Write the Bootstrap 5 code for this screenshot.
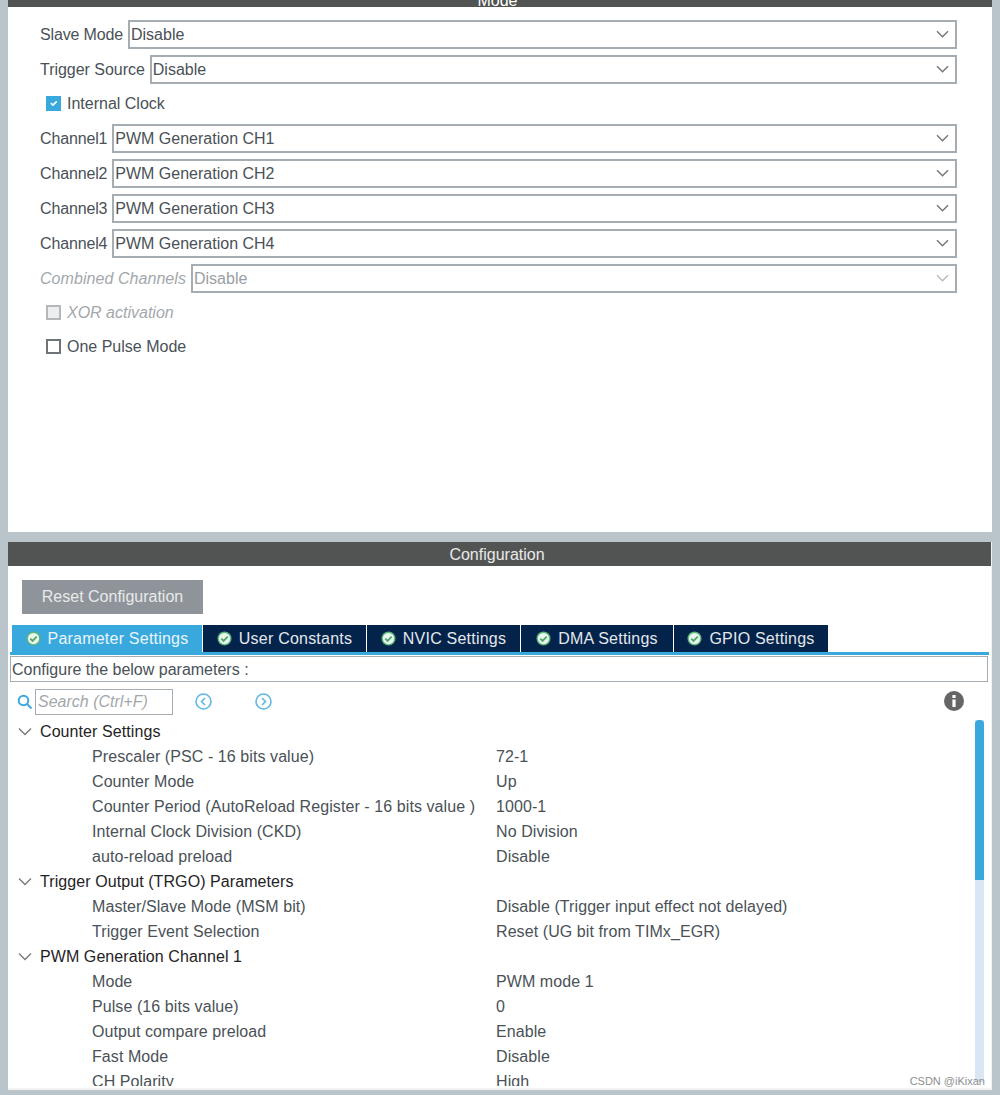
<!DOCTYPE html>
<html lang="en"><head><meta charset="utf-8"><title>TIM Mode and Configuration</title>
<link href="https://cdn.jsdelivr.net/npm/bootstrap@5.3.0/dist/css/bootstrap.min.css" rel="stylesheet">
<style>
html,body{height:1095px;overflow:hidden}
body{background:#b9c5cb;font-family:"Liberation Sans",Arial,sans-serif;font-size:16px;color:#4a5157;padding:0 8px;position:relative}
.pane{background:#fff}
.mode-pane{height:532px;margin-bottom:10px}
.head-cut{height:7px;background:#525453;color:#fff;overflow:hidden;font-size:16px;display:flex;justify-content:center;align-items:flex-end;padding-right:5px;line-height:9px}
.head-cut span{margin-bottom:2px}
.mode-form{padding:13px 35px 0 32px}
.frow{height:29px;margin-bottom:6px;gap:5px;white-space:nowrap}
.frow label{line-height:29px;letter-spacing:-.15px}
.frow label.is-off{letter-spacing:.06px}
.frow label.lbl-wide{letter-spacing:-.03px}
.frow .form-select{height:29px;border:2px solid #a5adb2;border-radius:0;padding:0 0 0 1px;font-size:16px;color:#4a5157;line-height:25px;flex:1;min-width:0;background-position:right 5px center;background-size:15px 11px;--bs-form-select-bg-img:url("data:image/svg+xml,%3csvg xmlns='http://www.w3.org/2000/svg' viewBox='0 0 16 12'%3e%3cpath fill='none' stroke='%23777' stroke-width='1.6' d='M2 2.5l6 6 6-6'/%3e%3c/svg%3e")}
.frow .form-select:disabled{background-color:#fff;color:#9aa0a4;border-color:#a5adb2;--bs-form-select-bg-img:url("data:image/svg+xml,%3csvg xmlns='http://www.w3.org/2000/svg' viewBox='0 0 16 12'%3e%3cpath fill='none' stroke='%23bbb' stroke-width='1.6' d='M2 2.5l6 6 6-6'/%3e%3c/svg%3e")}
.is-off{color:#a3a8ac;font-style:italic}
.chk{height:27px;margin:0 0 7px 6px;gap:6px;padding:0}
.chk .form-check-input{width:15px;height:15px;margin:0;border:2px solid #6f7478;border-radius:0;float:none;flex:none}
.chk .form-check-input:checked{background-color:#39a9dd;border-color:#39a9dd}
.chk .form-check-input:disabled{background-color:#eceeef;border-color:#b3b8bb;opacity:1}
.chk .form-check-label{opacity:1!important}
.cfg-head{height:24px;background:#525453;color:#e9eaea;text-align:center;line-height:25px;padding-right:5px}
.cfg-pane{height:548px;overflow:hidden;position:relative;border-right:1px solid #f2f2f2;border-bottom:2px solid #f2f2f2}
.btn-reset{--bs-btn-bg:#8e9499;--bs-btn-border-color:#8e9499;--bs-btn-color:#e8eaeb;--bs-btn-hover-bg:#8e9499;--bs-btn-hover-border-color:#8e9499;--bs-btn-hover-color:#e8eaeb;height:34px;width:181px;padding:0;border-radius:0;font-size:16px;margin:14px 0 11px 14px;display:block}
.cfg-tabs{padding-left:4px;height:27px;gap:1px;flex-wrap:nowrap;border:0}
.cfg-tab{background:#03234b;color:#e4e8ec;height:27px;line-height:27px;display:flex;align-items:center;justify-content:center;gap:7px;font-size:16px;letter-spacing:.22px;white-space:nowrap;text-decoration:none}
.cfg-tab:hover{color:#e4e8ec}
.cfg-tab.on{background:#39a9dd;color:#e9f5fb}
.t1{width:190px}.t2{width:163px}.t3{width:153px}.t4{width:152px}.t5{width:154px}
.tab-rule{height:3px;background:#39a9dd;margin:0 2px}
.cfg-line{height:26px;border:1px solid #a5adb2;margin:1px 3px 0 2px;line-height:25px;padding-left:1px;color:#4a5157}
.search-row{height:37px;padding:2px 0 0 9px;position:relative}
.search-box{width:138px;height:26px;border:1px solid #a5adb2;margin-left:2px;border-radius:0;padding:0 2px;font-size:16px;font-style:italic;line-height:24px;box-shadow:none}
.search-box::placeholder{color:#a3a8ac}
.nav-dot{margin-left:22px;flex:none}
.nav-dot+.nav-dot{margin-left:43px}
.info-dot{position:absolute;right:27px;top:9px}
.tree{margin:0;padding:0;list-style:none;color:#4a5157;letter-spacing:.08px;height:367px;overflow:hidden}
.tree li{height:25px;line-height:25px;display:flex;white-space:nowrap}
.tree .grp{padding-left:10px;color:#1f2326;gap:8px;align-items:center}
.tree .itm span:first-child{width:488px;padding-left:84px;flex:none}
.track{position:absolute;left:967px;top:178px;width:9px;height:362px;background:#d9e7f4}
.thumb{width:9px;height:160px;background:#39a9dd;border-radius:4px 4px 0 0}
.mark-w{position:absolute;right:15px;top:1074px;font-size:11px;color:#8b8f92;line-height:14px}
</style></head><body>
<section class="pane mode-pane">
<div class="head-cut"><span>Mode</span></div>
<form class="mode-form">
<div class="d-flex frow"><label>Slave Mode</label><select class="form-select" aria-label="Slave Mode"><option>Disable</option></select></div>
<div class="d-flex frow"><label class="lbl-wide">Trigger Source</label><select class="form-select" aria-label="Trigger Source"><option>Disable</option></select></div>
<div class="form-check d-flex align-items-center chk"><input class="form-check-input" type="checkbox" checked id="c1"><label class="form-check-label" for="c1">Internal Clock</label></div>
<div class="d-flex frow"><label>Channel1</label><select class="form-select" aria-label="Channel1"><option>PWM Generation CH1</option></select></div>
<div class="d-flex frow"><label>Channel2</label><select class="form-select" aria-label="Channel2"><option>PWM Generation CH2</option></select></div>
<div class="d-flex frow"><label>Channel3</label><select class="form-select" aria-label="Channel3"><option>PWM Generation CH3</option></select></div>
<div class="d-flex frow"><label>Channel4</label><select class="form-select" aria-label="Channel4"><option>PWM Generation CH4</option></select></div>
<div class="d-flex frow"><label class="is-off">Combined Channels</label><select class="form-select" disabled aria-label="Combined Channels"><option>Disable</option></select></div>
<div class="form-check d-flex align-items-center chk"><input class="form-check-input" type="checkbox" disabled id="c2"><label class="form-check-label is-off" for="c2">XOR activation</label></div>
<div class="form-check d-flex align-items-center chk"><input class="form-check-input" type="checkbox" id="c3"><label class="form-check-label" for="c3">One Pulse Mode</label></div>
</form>
</section>
<section class="pane cfg-pane">
<div class="cfg-head">Configuration</div>
<button type="button" class="btn btn-reset">Reset Configuration</button>
<nav class="nav cfg-tabs">
<a class="cfg-tab on t1" href="#"><svg width="15" height="15" viewBox="0 0 16 16"><circle cx="8" cy="8" r="7.5" fill="#5cb578"/><circle cx="8" cy="8" r="6" fill="#e9f6ee"/><path d="M4.6 8.2l2.4 2.4 4.4-4.6" fill="none" stroke="#4da86b" stroke-width="2"/></svg>Parameter Settings</a>
<a class="cfg-tab t2" href="#"><svg width="15" height="15" viewBox="0 0 16 16"><circle cx="8" cy="8" r="7.5" fill="#5cb578"/><circle cx="8" cy="8" r="6" fill="#e9f6ee"/><path d="M4.6 8.2l2.4 2.4 4.4-4.6" fill="none" stroke="#4da86b" stroke-width="2"/></svg>User Constants</a>
<a class="cfg-tab t3" href="#"><svg width="15" height="15" viewBox="0 0 16 16"><circle cx="8" cy="8" r="7.5" fill="#5cb578"/><circle cx="8" cy="8" r="6" fill="#e9f6ee"/><path d="M4.6 8.2l2.4 2.4 4.4-4.6" fill="none" stroke="#4da86b" stroke-width="2"/></svg>NVIC Settings</a>
<a class="cfg-tab t4" href="#"><svg width="15" height="15" viewBox="0 0 16 16"><circle cx="8" cy="8" r="7.5" fill="#5cb578"/><circle cx="8" cy="8" r="6" fill="#e9f6ee"/><path d="M4.6 8.2l2.4 2.4 4.4-4.6" fill="none" stroke="#4da86b" stroke-width="2"/></svg>DMA Settings</a>
<a class="cfg-tab t5" href="#"><svg width="15" height="15" viewBox="0 0 16 16"><circle cx="8" cy="8" r="7.5" fill="#5cb578"/><circle cx="8" cy="8" r="6" fill="#e9f6ee"/><path d="M4.6 8.2l2.4 2.4 4.4-4.6" fill="none" stroke="#4da86b" stroke-width="2"/></svg>GPIO Settings</a>
</nav>
<div class="tab-rule"></div>
<div class="cfg-line">Configure the below parameters :</div>
<div class="d-flex align-items-center search-row">
<svg width="16" height="16" viewBox="0 0 16 16" fill="none" stroke="#39a9dd" stroke-width="2"><circle cx="6.5" cy="6.5" r="4.8"/><path d="M10 10l4.5 4.5"/></svg>
<input class="form-control search-box" placeholder="Search (Ctrl+F)" aria-label="Search">
<svg class="nav-dot" width="17" height="17" viewBox="0 0 17 17" fill="none" stroke="#5fb8e4" stroke-width="1.6"><circle cx="8.5" cy="8.5" r="7.5"/><path d="M10 5l-3.5 3.5L10 12"/></svg>
<svg class="nav-dot" width="17" height="17" viewBox="0 0 17 17" fill="none" stroke="#5fb8e4" stroke-width="1.6"><circle cx="8.5" cy="8.5" r="7.5"/><path d="M7 5l3.5 3.5L7 12"/></svg>
<svg class="info-dot" width="20" height="20" viewBox="0 0 20 20"><circle cx="10" cy="10" r="10" fill="#666"/><rect x="8.4" y="8.5" width="3.2" height="7.5" fill="#fff"/><rect x="8.4" y="4" width="3.2" height="3" fill="#fff"/></svg>
</div>
<ul class="tree">
<li class="grp"><svg width="14" height="9" viewBox="0 0 14 9" fill="none" stroke="#777" stroke-width="1.3"><path d="M1 1.5l6 6 6-6"/></svg>Counter Settings</li>
<li class="itm"><span>Prescaler (PSC - 16 bits value)</span><span>72-1</span></li>
<li class="itm"><span>Counter Mode</span><span>Up</span></li>
<li class="itm"><span>Counter Period (AutoReload Register - 16 bits value )</span><span>1000-1</span></li>
<li class="itm"><span>Internal Clock Division (CKD)</span><span>No Division</span></li>
<li class="itm"><span>auto-reload preload</span><span>Disable</span></li>
<li class="grp"><svg width="14" height="9" viewBox="0 0 14 9" fill="none" stroke="#777" stroke-width="1.3"><path d="M1 1.5l6 6 6-6"/></svg>Trigger Output (TRGO) Parameters</li>
<li class="itm"><span>Master/Slave Mode (MSM bit)</span><span>Disable (Trigger input effect not delayed)</span></li>
<li class="itm"><span>Trigger Event Selection</span><span>Reset (UG bit from TIMx_EGR)</span></li>
<li class="grp"><svg width="14" height="9" viewBox="0 0 14 9" fill="none" stroke="#777" stroke-width="1.3"><path d="M1 1.5l6 6 6-6"/></svg>PWM Generation Channel 1</li>
<li class="itm"><span>Mode</span><span>PWM mode 1</span></li>
<li class="itm"><span>Pulse (16 bits value)</span><span>0</span></li>
<li class="itm"><span>Output compare preload</span><span>Enable</span></li>
<li class="itm"><span>Fast Mode</span><span>Disable</span></li>
<li class="itm"><span>CH Polarity</span><span>High</span></li>
</ul>
<div class="track"><div class="thumb"></div></div>
</section>
<div class="mark-w">CSDN @iKixan</div>
<script src="https://cdn.jsdelivr.net/npm/bootstrap@5.3.0/dist/js/bootstrap.bundle.min.js"></script>
</body></html>
